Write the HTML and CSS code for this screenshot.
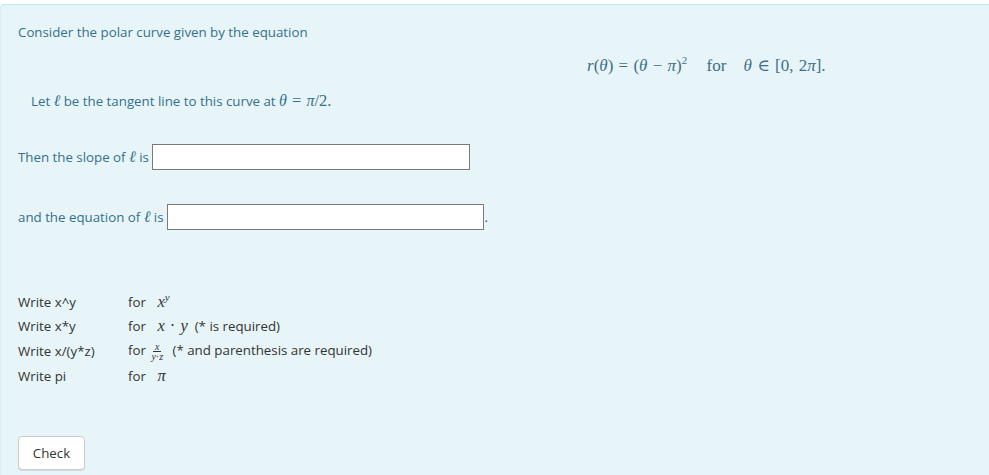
FILE: index.html
```html
<!DOCTYPE html>
<html lang="en">
<head>
    <meta charset="UTF-8">
    <title>Polar curve tangent</title>
    <link rel="stylesheet" href="styles.css">
</head>
<body>

<div class="panel">
    <p class="intro">Consider the polar curve given by the equation</p>

    <div class="display-math">
        <span class="mi">r</span>(<span class="mi">θ</span>) = (<span class="mi">θ</span> − <span class="mi">π</span>)<sup>2</sup>
        <span class="mtext">for</span>
        <span class="mi">θ</span> ∈ [0, 2<span class="mi">π</span>].
    </div>

    <p class="let">Let <span class="mi">ℓ</span> be the tangent line to this curve at <span class="math"><span class="mi">θ</span> = <span class="mi">π</span>/2.</span></p>

    <div class="answer-row first">
        <span>Then the slope of <span class="mi">ℓ</span> is</span>
        <input type="text" class="answer">
    </div>

    <div class="answer-row second">
        <span>and the equation of <span class="mi">ℓ</span> is</span>
        <input type="text" class="answer wide">
        <span class="dot">.</span>
    </div>

    <table class="hints">
        <tr>
            <td class="hint-key">Write x^y</td>
            <td>for <span class="math ml"><span class="mi">x</span><sup class="mi">y</sup></span></td>
        </tr>
        <tr>
            <td class="hint-key">Write x*y</td>
            <td>for <span class="math ml"><span class="mi">x</span> · <span class="mi">y</span></span> &nbsp;(* is required)</td>
        </tr>
        <tr>
            <td class="hint-key">Write x/(y*z)</td>
            <td>for <span class="frac"><span class="num mi">x</span><span class="den"><span class="mi">y</span>·<span class="mi">z</span></span></span> (* and parenthesis are required)</td>
        </tr>
        <tr>
            <td class="hint-key">Write pi</td>
            <td>for <span class="math ml"><span class="mi">π</span></span></td>
        </tr>
    </table>

    <button class="check">Check</button>
</div>

</body>
</html>
```

FILE: styles.css
```css
body {
    margin: 0;
    background-color: #ffffff;
    font-family: 'Open Sans', 'Noto Sans', sans-serif;
    font-size: 13.3px;
    color: #34708d;
    overflow: hidden;
}
.panel {
    margin-top: 4px;
    width: 1100px;
    height: 520px;
    padding: 17px 17px 0 17px;
    background-color: #e7f5f8;
    border-top: 1px solid #bde7f0;
    border-left: 1px solid #d4eef3;
    border-radius: 4px;
    box-sizing: border-box;
}
p {
    margin: 0;
    line-height: 20px;
}
.mi {
    font-family: 'Liberation Serif', 'DejaVu Serif', serif;
    font-style: italic;
}
.math {
    font-family: 'Liberation Serif', 'DejaVu Serif', serif;
    font-size: 16.5px;
    word-spacing: 1px;
}
.ml {
    margin-left: 8px;
}
sup {
    font-size: 11px;
    line-height: 0;
}
.display-math {
    font-family: 'Liberation Serif', 'DejaVu Serif', serif;
    font-size: 17px;
    color: #3d6f88;
    line-height: 20px;
    margin: 14px 0 0 569px;
    word-spacing: 1px;
}
.mtext {
    margin: 0 12px 0 14px;
}
.let {
    margin: 15px 0 0 13px;
}
.let .mi, .answer-row .mi {
    font-size: 16px;
}
.answer-row {
    display: flex;
    align-items: center;
    height: 26px;
}
.answer-row.first {
    margin-top: 33px;
}
.answer-row.second {
    margin-top: 34px;
}
.answer {
    width: 318px;
    height: 26px;
    margin-left: 3px;
    border: 1px solid #7a7a7a;
    background-color: #ffffff;
    box-sizing: border-box;
    padding: 0 4px;
}
.answer.wide {
    width: 317px;
}
.dot {
    margin-left: 1px;
    color: #444;
}
.hints {
    margin-top: 60px;
    margin-left: 0;
    border-collapse: collapse;
    color: #333333;
}
.hints td {
    padding: 0;
    height: 24px;
    vertical-align: middle;
    white-space: nowrap;
}
.hints tr:nth-child(3) td {
    height: 26px;
}
.hint-key {
    width: 110px;
}
.frac {
    display: inline-flex;
    flex-direction: column;
    align-items: center;
    vertical-align: middle;
    font-family: 'Liberation Serif', 'DejaVu Serif', serif;
    font-size: 10px;
    line-height: 9px;
    margin: 0 6px 0 2px;
}
.frac .num {
    border-bottom: 1px solid #333333;
    padding: 0 2px;
}
.check {
    display: block;
    margin-top: 48px;
    width: 67px;
    height: 34px;
    background-color: #ffffff;
    border: 1px solid #cccccc;
    border-radius: 4px;
    box-shadow: 0 1px 1px rgba(0, 0, 0, 0.1);
    font-family: 'Open Sans', 'Noto Sans', sans-serif;
    font-size: 13.3px;
    color: #333333;
    cursor: pointer;
}
```
